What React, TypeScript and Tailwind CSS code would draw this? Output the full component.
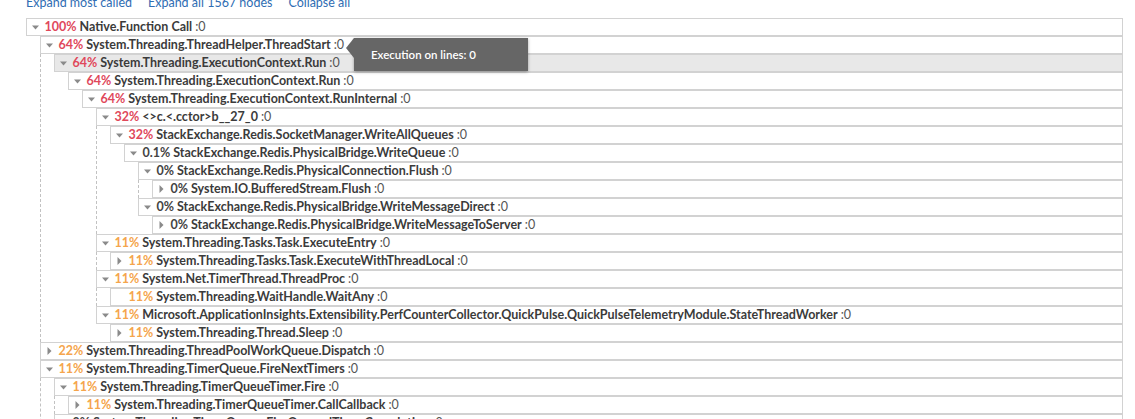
import React from 'react';

type Tone = 'red' | 'orange' | 'gray';

interface CallNode {
  pct: string;
  name: string;
  tone: Tone;
  state: 'open' | 'closed' | 'leaf';
  selected?: boolean;
  children?: CallNode[];
}

const open = (pct: string, tone: Tone, name: string, children: CallNode[], selected = false): CallNode => ({
  pct,
  tone,
  name,
  state: 'open',
  children,
  selected,
});
const closed = (pct: string, tone: Tone, name: string): CallNode => ({ pct, tone, name, state: 'closed' });
const leaf = (pct: string, tone: Tone, name: string): CallNode => ({ pct, tone, name, state: 'leaf' });

const tree: CallNode = open('100%', 'red', 'Native.Function Call', [
  open('64%', 'red', 'System.Threading.ThreadHelper.ThreadStart', [
    open(
      '64%',
      'red',
      'System.Threading.ExecutionContext.Run',
      [
        open('64%', 'red', 'System.Threading.ExecutionContext.Run', [
          open('64%', 'red', 'System.Threading.ExecutionContext.RunInternal', [
            open('32%', 'red', '<>c.<.cctor>b__27_0', [
              open('32%', 'red', 'StackExchange.Redis.SocketManager.WriteAllQueues', [
                open('0.1%', 'gray', 'StackExchange.Redis.PhysicalBridge.WriteQueue', [
                  open('0%', 'gray', 'StackExchange.Redis.PhysicalConnection.Flush', [
                    closed('0%', 'gray', 'System.IO.BufferedStream.Flush'),
                  ]),
                  open('0%', 'gray', 'StackExchange.Redis.PhysicalBridge.WriteMessageDirect', [
                    closed('0%', 'gray', 'StackExchange.Redis.PhysicalBridge.WriteMessageToServer'),
                  ]),
                ]),
              ]),
            ]),
            open('11%', 'orange', 'System.Threading.Tasks.Task.ExecuteEntry', [
              closed('11%', 'orange', 'System.Threading.Tasks.Task.ExecuteWithThreadLocal'),
            ]),
            open('11%', 'orange', 'System.Net.TimerThread.ThreadProc', [
              leaf('11%', 'orange', 'System.Threading.WaitHandle.WaitAny'),
            ]),
            open(
              '11%',
              'orange',
              'Microsoft.ApplicationInsights.Extensibility.PerfCounterCollector.QuickPulse.QuickPulseTelemetryModule.StateThreadWorker',
              [closed('11%', 'orange', 'System.Threading.Thread.Sleep')],
            ),
          ]),
        ]),
      ],
      true,
    ),
  ]),
  closed('22%', 'orange', 'System.Threading.ThreadPoolWorkQueue.Dispatch'),
  open('11%', 'orange', 'System.Threading.TimerQueue.FireNextTimers', [
    open('11%', 'orange', 'System.Threading.TimerQueueTimer.Fire', [
      closed('11%', 'orange', 'System.Threading.TimerQueueTimer.CallCallback'),
    ]),
    closed('0%', 'gray', 'System.Threading.TimerQueue.FireQueuedTimerCompletion'),
  ]),
  closed('0%', 'gray', 'System.Threading.TimerQueue.AppendTimer'),
]);

const toneClass: Record<Tone, string> = {
  red: 'text-[#e0485b]',
  orange: 'text-[#f5a54c]',
  gray: 'text-[#444]',
};

function Caret({ state }: { state: CallNode['state'] }) {
  if (state === 'open') {
    return (
      <svg width="7" height="5" viewBox="0 0 7 5" className="block">
        <polygon points="0,0.5 7,0.5 3.5,4.5" fill="#8a8a8a" />
      </svg>
    );
  }
  if (state === 'closed') {
    return (
      <svg width="5" height="8" viewBox="0 0 5 8" className="ml-[1px] block">
        <polygon points="0.5,0 4.5,4 0.5,8" fill="#8a8a8a" />
      </svg>
    );
  }
  return null;
}

function Row({ node }: { node: CallNode }) {
  return (
    <div
      className={`flex h-[18px] items-center overflow-hidden whitespace-nowrap border border-[#d2d2d2] pl-[5px] text-[12.5px] leading-none ${
        node.selected ? 'bg-[#e8e8e8]' : 'bg-white'
      }`}
    >
      <span className="flex w-[12.5px] shrink-0 items-center">
        <Caret state={node.state} />
      </span>
      <span className={`font-bold ${toneClass[node.tone]}`}>{node.pct}</span>
      <span className="ml-[3px] font-bold text-[#3b3b3b]">{node.name}</span>
      <span className="ml-[3px] text-[#555]">:0</span>
    </div>
  );
}

function TreeNode({ node, hasNext }: { node: CallNode; hasNext: boolean }) {
  const kids = node.children ?? [];
  return (
    <div>
      <Row node={node} />
      {kids.length > 0 && (
        <div className={hasNext ? 'border-l border-dashed border-[#c2c2c2] pl-[13px]' : 'pl-[14px]'}>
          {kids.map((kid, i) => (
            <TreeNode key={i} node={kid} hasNext={i < kids.length - 1} />
          ))}
        </div>
      )}
    </div>
  );
}

export default function App() {
  return (
    <div
      className="relative h-[419px] w-full overflow-hidden bg-white pl-[26px] pr-[12px]"
      style={{ fontFamily: 'Lato, "Noto Sans", Arial, sans-serif' }}
    >
      <div className="-mt-[5px] mb-[7px] flex h-[16px] gap-[16px] text-[12.5px] leading-[16px] text-[#2f6db3]">
        <a className="cursor-pointer">Expand most called</a>
        <a className="cursor-pointer">Expand all 1567 nodes</a>
        <a className="cursor-pointer">Collapse all</a>
      </div>

      <TreeNode node={tree} hasNext={false} />

      <div className="absolute left-[354px] top-[38px] flex h-[33px] w-[174px] items-center bg-[#666666] pl-[17px] text-[11.5px] font-semibold text-white shadow-[0_1px_3px_rgba(0,0,0,0.35)]">
        <span className="absolute -left-[8px] top-0 h-0 w-0 border-y-[10px] border-r-[8px] border-y-transparent border-r-[#666666]" />
        Execution on lines: 0
      </div>
    </div>
  );
}
